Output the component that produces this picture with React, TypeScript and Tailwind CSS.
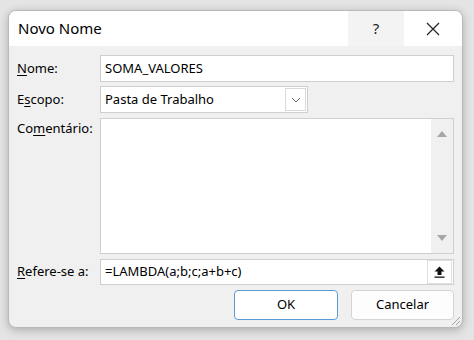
import React from 'react';

const font = { fontFamily: '"Noto Sans", "Open Sans", sans-serif' };

const Label: React.FC<{ pre?: string; u: string; post: string; className?: string }> = ({ pre = '', u, post, className = '' }) => (
  <div className={`w-[83px] shrink-0 text-[13px] text-black ${className}`}>
    {pre}
    <span className="underline underline-offset-2">{u}</span>
    {post}
  </div>
);

const Tri: React.FC<{ down?: boolean }> = ({ down }) => (
  <svg width="10" height="6" viewBox="0 0 10 6">
    <path d={down ? 'M0 0 L10 0 L5 6 Z' : 'M0 6 L10 6 L5 0 Z'} fill="#a6a6a6" />
  </svg>
);

export default function App() {
  return (
    <div className="w-[474px] h-[340px] bg-[#e4e4e4] pt-[10px] pl-[8px] overflow-hidden" style={font}>
      <div className="relative w-[455px] h-[318px] rounded-lg border border-[#b9b9b9] bg-[#f0f0f0] shadow-[0_2px_8px_rgba(0,0,0,0.25)] overflow-hidden flex flex-col">
        {/* title bar */}
        <div className="h-[35px] shrink-0 bg-white flex items-stretch">
          <div className="flex-1 pl-[9px] flex items-center text-[15px] text-black">Novo Nome</div>
          <div className="w-[56px] bg-[#f3f3f3] flex items-center justify-center text-[15px] text-[#222]">?</div>
          <div className="w-[58px] flex items-center justify-center">
            <svg width="14" height="14" viewBox="0 0 14 14">
              <path d="M1 1 L13 13 M13 1 L1 13" stroke="#222" strokeWidth="1.2" />
            </svg>
          </div>
        </div>

        {/* body */}
        <div className="flex-1 flex flex-col pt-[9px] pl-[8px] pr-[8px] gap-[4px]">
          <div className="flex items-center h-[27px]">
            <Label u="N" post="ome:" />
            <div className="flex-1 h-full bg-white border border-[#cfcfcf] flex items-center pl-[4px] text-[13px] text-black">
              SOMA_VALORES
            </div>
          </div>

          <div className="flex items-center h-[27px]">
            <Label pre="E" u="s" post="copo:" />
            <div className="w-[208px] h-full bg-white border border-[#cfcfcf] flex items-center pl-[4px] pr-[1px] text-[13px] text-black">
              <span className="flex-1">Pasta de Trabalho</span>
              <div className="w-[21px] h-[23px] border border-[#d9d9d9] flex items-center justify-center">
                <svg width="10" height="6" viewBox="0 0 10 6">
                  <path d="M1 1 L5 5 L9 1" stroke="#707070" strokeWidth="1" fill="none" />
                </svg>
              </div>
            </div>
          </div>

          <div className="flex items-start h-[136px] mt-[1px]">
            <Label pre="Co" u="m" post="entário:" className="pt-[1px]" />
            <div className="flex-1 h-full bg-white border border-[#cfcfcf] flex justify-end">
              <div className="w-[22px] h-full bg-[#f0f0f0] flex flex-col items-center justify-between py-[12px]">
                <Tri />
                <Tri down />
              </div>
            </div>
          </div>

          <div className="flex items-center h-[26px] mt-[1px]">
            <Label u="R" post="efere-se a:" />
            <div className="flex-1 h-full bg-white border border-[#cfcfcf] flex items-center pl-[4px] pr-[1px] text-[13px] text-black">
              <span className="flex-1">=LAMBDA(a;b;c;a+b+c)</span>
              <div className="w-[25px] h-[24px] border border-[#e0e0e0] bg-white flex items-center justify-center">
                <svg width="11" height="12" viewBox="0 0 11 12">
                  <path d="M5.5 0.5 L10.5 5.5 L7.5 5.5 L7.5 9 L3.5 9 L3.5 5.5 L0.5 5.5 Z" fill="#111" />
                  <rect x="0.5" y="10.5" width="10" height="1.3" fill="#111" />
                </svg>
              </div>
            </div>
          </div>

          <div className="flex justify-end gap-[13px] h-[30px] mt-[1px]">
            <button className="w-[104px] h-full rounded-[4px] border border-[#5b9bd5] bg-white text-[13px] text-black">OK</button>
            <button className="w-[103px] h-full rounded-[4px] border border-[#d4d4d4] bg-[#fdfdfd] text-[13px] text-black">Cancelar</button>
          </div>
        </div>

        {/* resize grip */}
        <svg className="absolute right-[1px] bottom-[1px]" width="12" height="12" viewBox="0 0 12 12">
          <path d="M11 3 L3 11 M11 7 L7 11" stroke="#a0a0a0" strokeWidth="1" />
        </svg>
      </div>
    </div>
  );
}
